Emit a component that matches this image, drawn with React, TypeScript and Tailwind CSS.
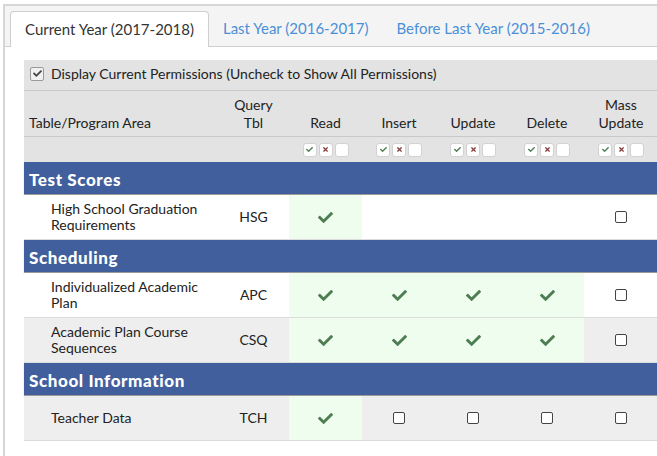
import React from 'react';
import { FaCheck, FaTimes } from 'react-icons/fa';

type Cell = 'none' | 'check' | 'box';

interface Row {
  name: string;
  code: string;
  cells: Cell[];
  shaded?: boolean;
}

interface Section {
  title: string;
  rows: Row[];
}

const sections: Section[] = [
  {
    title: 'Test Scores',
    rows: [
      {
        name: 'High School Graduation Requirements',
        code: 'HSG',
        cells: ['check', 'none', 'none', 'none', 'box'],
      },
    ],
  },
  {
    title: 'Scheduling',
    rows: [
      {
        name: 'Individualized Academic Plan',
        code: 'APC',
        cells: ['check', 'check', 'check', 'check', 'box'],
      },
      {
        name: 'Academic Plan Course Sequences',
        code: 'CSQ',
        cells: ['check', 'check', 'check', 'check', 'box'],
        shaded: true,
      },
    ],
  },
  {
    title: 'School Information',
    rows: [
      {
        name: 'Teacher Data',
        code: 'TCH',
        cells: ['check', 'box', 'box', 'box', 'box'],
        shaded: true,
      },
    ],
  },
];

const permCols = ['Read', 'Insert', 'Update', 'Delete', 'Mass Update'];
const permWidths = ['w-[73px]', 'w-[74px]', 'w-[74px]', 'w-[74px]', 'w-[74px]'];

const FilterBoxes: React.FC = () => (
  <div className="flex gap-[2px]">
    <div className="w-[14px] h-[14px] bg-white border border-[#d2d2d2] rounded-[3px] flex items-center justify-center">
      <FaCheck className="text-[#4f7f55]" size={7} />
    </div>
    <div className="w-[14px] h-[14px] bg-white border border-[#d2d2d2] rounded-[3px] flex items-center justify-center">
      <FaTimes className="text-[#8a3b3b]" size={7} />
    </div>
    <div className="w-[14px] h-[14px] bg-white border border-[#d2d2d2] rounded-[3px]" />
  </div>
);

const EmptyBox: React.FC = () => (
  <div className="w-[12px] h-[12px] rounded-[2px] border-[1.5px] border-[#444] bg-white" />
);

export default function App() {
  return (
    <div
      className="w-[657px] h-[456px] bg-white overflow-hidden text-[#222]"
      style={{ fontFamily: 'Lato, "Open Sans", sans-serif' }}
    >
      <div className="ml-[3px] mt-[4px] h-[452px] border-l-2 border-t-2 border-[#d6d6d6] bg-white">
        {/* Tabs */}
        <div className="h-[41px] bg-[#f4f4f4] border-b border-[#cfcfcf] flex items-end pl-[5px]">
          <div className="h-[36px] -mb-px px-[14px] flex items-center bg-white border border-b-0 border-[#cfcfcf] rounded-t-[4px] text-[15px] text-[#333]">
            Current Year (2017-2018)
          </div>
          <div className="h-[36px] flex items-center pl-[14px] text-[15px] text-[#4a90d9]">
            Last Year (2016-2017)
          </div>
          <div className="h-[36px] flex items-center pl-[28px] text-[15px] text-[#4a90d9]">
            Before Last Year (2015-2016)
          </div>
        </div>

        {/* Panel */}
        <div className="pl-[19px] pt-[13px]">
          <div className="w-[640px]">
            <div className="bg-[#e2e3e2]">
              <div className="h-[31px] flex items-center gap-[7px] pl-[6px] pb-[3px] border-b border-[#c9c9c9] text-[14px]">
                <div className="w-[14px] h-[14px] rounded-[2px] border border-[#9a9a9a] bg-[#f0f0f0] flex items-center justify-center">
                  <FaCheck className="text-[#444]" size={9} />
                </div>
                <span>Display Current Permissions (Uncheck to Show All Permissions)</span>
              </div>
              <div className="h-[46px] flex items-end pb-[4px] border-b border-[#c9c9c9] text-[14px] leading-[18px]">
                <div className="w-[194px] pl-[5px]">Table/Program Area</div>
                <div className="w-[71px] text-center">
                  Query
                  <br />
                  Tbl
                </div>
                {permCols.map((c, i) => (
                  <div key={c} className={`${permWidths[i]} text-center`}>
                    {c === 'Mass Update' ? (
                      <>
                        Mass
                        <br />
                        Update
                      </>
                    ) : (
                      c
                    )}
                  </div>
                ))}
              </div>
              <div className="h-[25px] flex items-center">
                <div className="w-[194px]" />
                <div className="w-[71px]" />
                {permCols.map((c, i) => (
                  <div key={c} className={`${permWidths[i]} flex justify-center`}>
                    <FilterBoxes />
                  </div>
                ))}
              </div>
            </div>

            {sections.map((s) => (
              <div key={s.title}>
                <div className="h-[33px] bg-[#415f9d] border-b border-[#9a9a9a] flex items-center pl-[5px] pt-[3px] text-white font-black text-[17px] tracking-[0.6px] shadow-[0_1px_1px_rgba(0,0,0,0.25)]">
                  {s.title}
                </div>
                {s.rows.map((r) => (
                  <div
                    key={r.code}
                    className={`h-[45px] flex border-b border-[#dcdcdc] text-[14px] leading-[16px] ${
                      r.shaded ? 'bg-[#eeeeee]' : 'bg-white'
                    }`}
                  >
                    <div className="w-[194px] pl-[27px] pr-[12px] flex items-center">{r.name}</div>
                    <div className="w-[71px] flex items-center justify-center">{r.code}</div>
                    {r.cells.map((c, i) => (
                      <div
                        key={i}
                        className={`${permWidths[i]} flex items-center justify-center ${
                          c === 'check' ? 'bg-[#effdef]' : ''
                        }`}
                      >
                        {c === 'check' && <FaCheck className="text-[#4e7d52]" size={15} />}
                        {c === 'box' && <EmptyBox />}
                      </div>
                    ))}
                  </div>
                ))}
              </div>
            ))}
          </div>
        </div>
      </div>
    </div>
  );
}
